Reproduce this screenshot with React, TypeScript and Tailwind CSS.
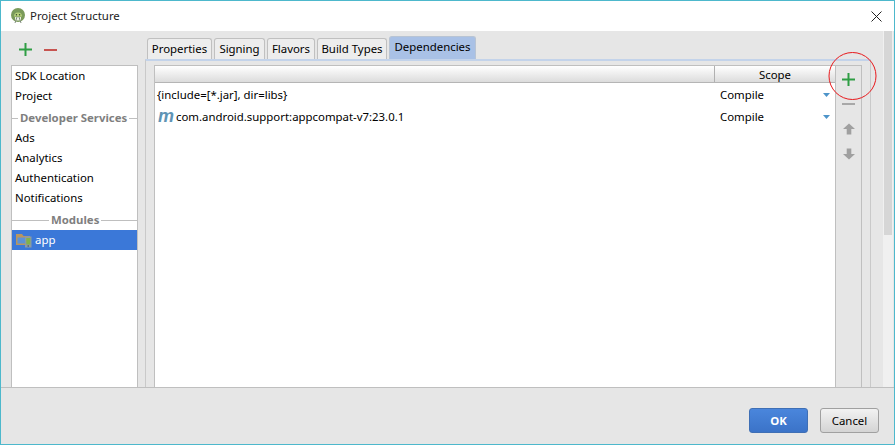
const font = { fontFamily: '"Noto Sans", "Open Sans", sans-serif' };

function Plus({ size = 13 }: { size?: number }) {
  return (
    <svg width={size} height={size} viewBox="0 0 13 13" className="block">
      <path d="M5.5 0h2v5.5H13v2H7.5V13h-2V7.5H0v-2h5.5z" fill="#2f9e44" />
    </svg>
  );
}

function AndroidLogo() {
  return (
    <svg width="16" height="16" viewBox="0 0 16 16" className="block">
      <circle cx="8" cy="7" r="7" fill="#7a9a5a" />
      <path d="M4 8.5a4 4 0 0 1 8 0z" fill="#b5cf7a" />
      <circle cx="6.4" cy="6.8" r="0.7" fill="#33442a" />
      <circle cx="9.6" cy="6.8" r="0.7" fill="#33442a" />
      <path d="M5 9h6v3.5H5z" fill="#e8efe0" />
      <path d="M5 15l2-6M11 15L9 9" stroke="#7d8a78" strokeWidth="1" fill="none" />
    </svg>
  );
}

function ModuleIcon() {
  return (
    <svg width="16" height="15" viewBox="0 0 16 15" className="block">
      <path d="M0 1h6l1.5 2H14v9H0z" fill="#b89660" />
      <path d="M1.5 4.5h9v6h-9z" fill="#5c93d6" />
      <rect x="9" y="3.5" width="6.5" height="11" fill="#8a9aa8" />
      <rect x="10.3" y="5" width="4" height="6.5" fill="#82b24a" />
      <rect x="11.5" y="12.5" width="1.5" height="1" fill="#3d4a55" />
    </svg>
  );
}

function MavenIcon() {
  return (
    <span className="w-[14px] text-[18px] leading-none italic font-bold text-[#5f94b5] -mt-[3px]" style={{ fontFamily: '"Liberation Sans", sans-serif' }}>
      m
    </span>
  );
}

function Caret() {
  return (
    <svg width="7" height="4" viewBox="0 0 7 4" className="block">
      <path d="M0 0h7L3.5 4z" fill="#4d94c9" />
    </svg>
  );
}

function Separator({ label, left }: { label: string; left: string }) {
  return (
    <div className="h-[22px] flex items-center text-[#7f7f7f] font-bold pt-[2px]">
      <span className={`h-px bg-[#bfbfbf] ${left}`} />
      <span className="px-[2px]">{label}</span>
      <span className="h-px bg-[#bfbfbf] flex-1" />
    </div>
  );
}

function Item({ children }: { children: React.ReactNode }) {
  return <div className="h-[20px] pl-[3px] flex items-center text-black">{children}</div>;
}

function Tab({ label, active, w }: { label: string; active?: boolean; w: string }) {
  return active ? (
    <div className={`${w} h-[23px] rounded-t-[3px] border border-b-0 border-[#b8c4d4] bg-[#a9c1e6] flex items-center justify-center pb-[3px] text-black`}>
      {label}
    </div>
  ) : (
    <div className={`${w} h-[21px] mr-[2px] rounded-t-[3px] border border-b-0 border-[#c0c0c0] bg-[#ededed] flex items-center justify-center text-black`}>
      {label}
    </div>
  );
}

function Row({ children, h }: { children: React.ReactNode; h: string }) {
  return <div className={`${h} flex items-center text-black`}>{children}</div>;
}

function ScopeCell() {
  return (
    <span className="w-[121px] pl-[6px] pr-[5px] flex items-center justify-between">
      <span>Compile</span>
      <Caret />
    </span>
  );
}

export default function App() {
  return (
    <div className="w-[895px] h-[445px] overflow-hidden relative bg-[#e6e6e6] border-x border-b border-[#4db8cc] flex flex-col text-[11.4px] leading-none" style={font}>
      <div className="h-[31px] shrink-0 bg-white flex items-center pl-[9px] pr-[12px] border-t border-[#4db8cc]">
        <AndroidLogo />
        <span className="ml-[4px] text-[#222]">Project Structure</span>
        <svg width="11" height="11" viewBox="0 0 11 11" className="ml-auto block">
          <path d="M0.5 0.5l10 10M10.5 0.5l-10 10" stroke="#222" strokeWidth="1" fill="none" />
        </svg>
      </div>

      <div className="flex-1 min-h-0 flex">
        <div className="w-[137px] shrink-0 flex flex-col pl-[10px]">
          <div className="h-[34px] shrink-0 flex items-center pl-[8px] gap-[12px] pt-[3px]">
            <Plus />
            <svg width="13" height="2" viewBox="0 0 13 2" className="block"><rect width="13" height="2" fill="#c75450" /></svg>
          </div>
          <div className="flex-1 bg-white border-x border-[#bfbfbf] border-t">
            <Item>SDK Location</Item>
            <Item>Project</Item>
            <Separator label="Developer Services" left="w-[6px]" />
            <Item>Ads</Item>
            <Item>Analytics</Item>
            <Item>Authentication</Item>
            <Item>Notifications</Item>
            <Separator label="Modules" left="w-[37px]" />
            <div className="h-[20px] bg-[#3b78d8] text-white flex items-center pl-[4px] gap-[3px]">
              <ModuleIcon />
              <span>app</span>
            </div>
          </div>
        </div>

        <div className="w-[7px] shrink-0 flex flex-col items-center justify-end pb-[45px]">
          <div className="w-[3px] h-[12px] bg-[radial-gradient(#9a9a9a_0.6px,transparent_0.7px)] bg-[length:2px_2px] ml-[7px]" />
        </div>

        <div className="w-[726px] shrink-0 flex flex-col">
          <div className="h-[28px] shrink-0 flex items-end pl-[2px]">
            <Tab label="Properties" w="w-[65px]" />
            <Tab label="Signing" w="w-[51px]" />
            <Tab label="Flavors" w="w-[48px]" />
            <Tab label="Build Types" w="w-[70px]" />
            <Tab label="Dependencies" w="w-[87px]" active />
          </div>
          <div className="flex-1 min-h-0 flex border-t-[2px] border-t-[#c3d3ea] border-l border-r border-[#c9c9c9] pl-[8px] pr-[8px] pt-[4px]">
            <div className="flex-1 min-w-0 flex flex-col bg-white border-l border-t border-[#bfbfbf]">
              <div className="h-[17px] shrink-0 flex bg-[linear-gradient(#ffffff,#dcdcdc)] border-b border-[#b5b5b5]">
                <div className="flex-1" />
                <div className="w-[121px] border-l border-[#b0b0b0] flex items-center justify-center text-black pt-[1px]">Scope</div>
              </div>
              <Row h="h-[24px]">
                <span className="pl-[2px] flex-1">{"{include=[*.jar], dir=libs}"}</span>
                <ScopeCell />
              </Row>
              <Row h="h-[20px]">
                <span className="pl-[3px] flex-1 flex items-center gap-[4px]"><MavenIcon /><span>com.android.support:appcompat-v7:23.0.1</span></span>
                <ScopeCell />
              </Row>
            </div>
            <div className="w-[27px] shrink-0 border-x border-t border-[#bfbfbf] flex flex-col items-center pt-[7px] bg-[#e6e6e6]">
              <Plus />
              <svg width="13" height="2" viewBox="0 0 13 2" className="block mt-[17px]"><rect width="13" height="2" fill="#a8a8a8" /></svg>
              <svg width="12" height="12" viewBox="0 0 13 12" className="block mt-[18px]"><path d="M6.5 0L13 6H9v6H4V6H0z" fill="#a0a0a0" /></svg>
              <svg width="12" height="12" viewBox="0 0 13 12" className="block mt-[13px]"><path d="M6.5 12L13 6H9V0H4v6H0z" fill="#a0a0a0" /></svg>
            </div>
          </div>
        </div>

        <div className="flex-1 relative bg-[#e6e6e6]">
          <div className="absolute right-[1px] top-0 bottom-0 w-[10px] bg-[#f0f0f0]">
            <div className="h-[204px] bg-[#d6d6d6] border-x border-[#f0f0f0]" />
          </div>
        </div>
      </div>

      <div className="h-[57px] shrink-0 border-t border-[#bfbfbf] flex items-center justify-end pr-[15px] gap-[12px] pt-[9px]">
        <div className="w-[59px] h-[25px] rounded-[3px] border border-[#3f6fb5] bg-[linear-gradient(#4a86dc,#3b73c8)] text-white font-bold flex items-center justify-center">OK</div>
        <div className="w-[59px] h-[25px] rounded-[3px] border border-[#a0a0a0] bg-[linear-gradient(#f2f2f2,#d4d4d4)] text-black flex items-center justify-center">Cancel</div>
      </div>

      <svg className="absolute left-[827px] top-[51px] block" width="49" height="50" viewBox="0 0 49 50">
        <ellipse cx="24.5" cy="25" rx="23.5" ry="23.5" fill="none" stroke="#e8191c" strokeWidth="1" />
      </svg>
    </div>
  );
}
